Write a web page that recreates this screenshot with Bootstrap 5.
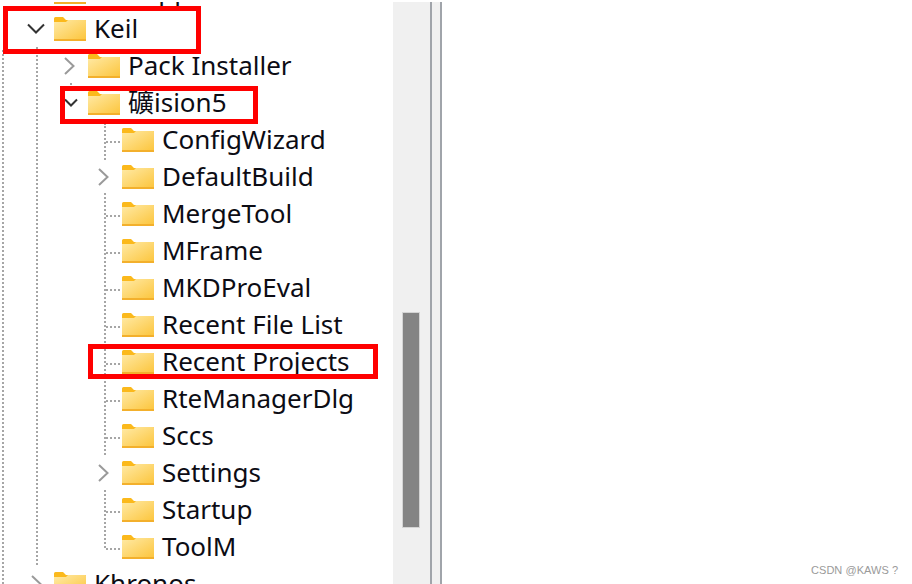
<!DOCTYPE html>
<html lang="zh">
<head>
<meta charset="utf-8">
<title>Registry tree</title>
<link href="https://cdn.jsdelivr.net/npm/bootstrap@5.3.0/dist/css/bootstrap.min.css" rel="stylesheet">
<style>
html,body{height:100%;margin:0;background:#fff;overflow:hidden}
.stage{width:912px;height:584px;position:relative;overflow:hidden;background:#fff}
.tree-pane{width:393px;height:582px;margin-top:2px;overflow:hidden;font-family:"Noto Sans","Noto Sans CJK SC",sans-serif;font-size:26px;color:#0c0c14;position:relative;flex:none}
.tree-list{margin-top:-29px}
.node{height:37px;display:flex;align-items:center;position:relative;white-space:nowrap;line-height:37px}
.lvl0{padding-left:54px}.lvl1{padding-left:88px}.lvl2{padding-left:122px}
.folder{width:32px;height:24px;flex:none;margin-right:8px;display:block}
.twist{position:absolute;top:50%;transform:translateY(-50%);display:block}
.sb-col{width:37px;height:582px;margin-top:2px;background:#f0f0f0;position:relative;flex:none}
.sb-thumb{position:absolute;left:10px;top:311px;width:16px;height:214px;background:#848484;box-shadow:0 0 0 1px #d4d4d4}
.sep-a{width:2px;height:582px;margin-top:2px;background:#a0a4aa;flex:none}
.sep-gap{width:8px;height:582px;margin-top:2px;background:#f0f0f0;flex:none}
.dots-v{position:absolute;width:0;border-left:2px dotted #a6a6a6}
.dots-h{position:absolute;height:0;border-top:2px dotted #a6a6a6}
.redbox{position:absolute;border:5px solid #f00}
.mark-text{position:absolute;left:811px;top:562px;font-family:"Liberation Sans",sans-serif;font-size:11px;color:#9a9a9a;letter-spacing:.05px;white-space:nowrap}
</style>
</head>
<body>
<svg width="0" height="0" class="d-block position-absolute">
<defs>
<linearGradient id="fg" x1="0" y1="0" x2="1" y2="1"><stop offset="0" stop-color="#ffeaa6"/><stop offset="1" stop-color="#fcc63f"/></linearGradient>
<symbol id="fold" viewBox="0 0 32 24">
<path d="M0 1.500Q0 0 1.500 0H9L12 3H31Q32 3 32 4V10H0Z" fill="#fbb91c"/>
<path d="M0 5H12L14 3H31Q32 3 32 4V22H0Z" fill="url(#fg)"/>
<rect x="0" y="22" width="32" height="2" fill="#f3b02c"/>
</symbol>
</defs>
</svg>
<div class="stage d-flex align-items-start">
<div class="tree-pane">
<div class="tree-list">
<div class="node lvl0"><svg class="folder"><use href="#fold"/></svg><span>Haoapp</span></div>
<div class="node lvl0"><svg class="twist" style="left:26px" width="20" height="12" viewBox="0 0 20 12"><path d="M2 1.500 10 9.500 18 1.500" fill="none" stroke="#333" stroke-width="2"/></svg><svg class="folder"><use href="#fold"/></svg><span>Keil</span></div>
<div class="node lvl1"><svg class="twist" style="left:63px" width="13" height="20" viewBox="0 0 13 20"><path d="M2 2 10.500 10 2 18" fill="none" stroke="#9a9a9a" stroke-width="2"/></svg><svg class="folder"><use href="#fold"/></svg><span>Pack Installer</span></div>
<div class="node lvl1"><svg class="twist" style="left:63px" width="16" height="11" viewBox="0 0 16 11"><path d="M2 2 8 8 14 2" fill="none" stroke="#333" stroke-width="2"/></svg><svg class="folder"><use href="#fold"/></svg><span>礦ision5</span></div>
<div class="node lvl2"><svg class="folder"><use href="#fold"/></svg><span>ConfigWizard</span></div>
<div class="node lvl2"><svg class="twist" style="left:97px" width="13" height="20" viewBox="0 0 13 20"><path d="M2 2 10.500 10 2 18" fill="none" stroke="#9a9a9a" stroke-width="2"/></svg><svg class="folder"><use href="#fold"/></svg><span>DefaultBuild</span></div>
<div class="node lvl2"><svg class="folder"><use href="#fold"/></svg><span>MergeTool</span></div>
<div class="node lvl2"><svg class="folder"><use href="#fold"/></svg><span>MFrame</span></div>
<div class="node lvl2"><svg class="folder"><use href="#fold"/></svg><span>MKDProEval</span></div>
<div class="node lvl2"><svg class="folder"><use href="#fold"/></svg><span>Recent File List</span></div>
<div class="node lvl2"><svg class="folder"><use href="#fold"/></svg><span>Recent Projects</span></div>
<div class="node lvl2"><svg class="folder"><use href="#fold"/></svg><span>RteManagerDlg</span></div>
<div class="node lvl2"><svg class="folder"><use href="#fold"/></svg><span>Sccs</span></div>
<div class="node lvl2"><svg class="twist" style="left:97px" width="13" height="20" viewBox="0 0 13 20"><path d="M2 2 10.500 10 2 18" fill="none" stroke="#9a9a9a" stroke-width="2"/></svg><svg class="folder"><use href="#fold"/></svg><span>Settings</span></div>
<div class="node lvl2"><svg class="folder"><use href="#fold"/></svg><span>Startup</span></div>
<div class="node lvl2"><svg class="folder"><use href="#fold"/></svg><span>ToolM</span></div>
<div class="node lvl0"><svg class="twist" style="left:30px" width="13" height="20" viewBox="0 0 13 20"><path d="M2 2 10.500 10 2 18" fill="none" stroke="#9a9a9a" stroke-width="2"/></svg><svg class="folder"><use href="#fold"/></svg><span>Khronos</span></div>
</div>
<div class="dots-v" style="left:2px;top:48px;height:534px"></div>
<div class="dots-v" style="left:36px;top:45px;height:518px"></div>
<div class="dots-v" style="left:70px;top:81px;height:5px"></div>
<div class="dots-v" style="left:104px;top:121px;height:37px"></div>
<div class="dots-v" style="left:104px;top:191px;height:262px"></div>
<div class="dots-v" style="left:104px;top:488px;height:58px"></div>
<div class="dots-h" style="left:106px;top:139px;width:14px"></div>
<div class="dots-h" style="left:106px;top:213px;width:14px"></div>
<div class="dots-h" style="left:106px;top:250px;width:14px"></div>
<div class="dots-h" style="left:106px;top:287px;width:14px"></div>
<div class="dots-h" style="left:106px;top:324px;width:14px"></div>
<div class="dots-h" style="left:106px;top:361px;width:14px"></div>
<div class="dots-h" style="left:106px;top:398px;width:14px"></div>
<div class="dots-h" style="left:106px;top:435px;width:14px"></div>
<div class="dots-h" style="left:106px;top:509px;width:14px"></div>
<div class="dots-h" style="left:106px;top:546px;width:14px"></div>
</div>
<div class="sb-col"><div class="sb-thumb"></div></div>
<div class="sep-a"></div>
<div class="sep-gap"></div>
<div class="sep-a"></div>
<div class="redbox" style="left:3px;top:6px;width:198px;height:48px"></div>
<div class="redbox" style="left:60px;top:86px;width:198px;height:38px"></div>
<div class="redbox" style="left:88px;top:344px;width:290px;height:35px"></div>
<div class="mark-text">CSDN @KAWS ?</div>
</div>
<script src="https://cdn.jsdelivr.net/npm/bootstrap@5.3.0/dist/js/bootstrap.bundle.min.js"></script>
</body>
</html>
